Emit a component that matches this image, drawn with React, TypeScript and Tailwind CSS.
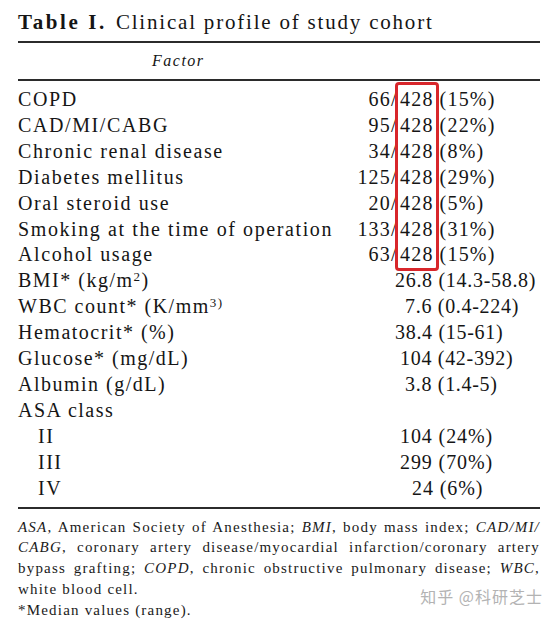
const counts = [
  { label: "COPD", n: "66", pct: "(15%)" },
  { label: "CAD/MI/CABG", n: "95", pct: "(22%)" },
  { label: "Chronic renal disease", n: "34", pct: "(8%)" },
  { label: "Diabetes mellitus", n: "125", pct: "(29%)" },
  { label: "Oral steroid use", n: "20", pct: "(5%)" },
  { label: "Smoking at the time of operation", n: "133", pct: "(31%)" },
  { label: "Alcohol usage", n: "63", pct: "(15%)" },
];

function Rule() {
  return <div className="h-[2px] bg-[#2b2b2b]" />;
}

export default function App() {
  return (
    <div className="relative w-[558px] h-[622px] overflow-hidden bg-white px-[18px] font-['Liberation_Serif',serif] text-[#151515]">
      {/* Title */}
      <h1 className="pt-[8px] h-[41px] text-[21px] leading-[28px] whitespace-nowrap">
        <span className="font-bold tracking-[2.6px]">Table I.</span>
        <span className="ml-[9px] tracking-[1.8px]">Clinical profile of study cohort</span>
      </h1>
      <Rule />
      <div className="h-[36px] flex items-center pl-[134px] text-[16px] italic tracking-[1.5px]">Factor</div>
      <Rule />

      {/* Count rows */}
      <div className="mt-[6px] flex items-start text-[20px] leading-[25.9px] whitespace-nowrap">
        <div className="w-[330px] tracking-[1.6px]">
          {counts.map((r) => (
            <div key={r.label}>{r.label}</div>
          ))}
        </div>
        <div className="w-[43px] text-right tracking-[1.2px]">
          {counts.map((r) => (
            <div key={r.label}>{r.n}</div>
          ))}
        </div>
        <div className="w-[4px]">
          {counts.map((r) => (
            <div key={r.label}>/</div>
          ))}
        </div>
        <div className="-mt-[5px] -mb-[3px] pt-[2px] pl-[2px] pr-[2px] border-[3px] border-[#d8262b] rounded-[4px] tracking-[1.2px]">
          {counts.map((r) => (
            <div key={r.label}>428</div>
          ))}
        </div>
        <div className="pl-[1px] tracking-[1.2px]">
          {counts.map((r) => (
            <div key={r.label}>{r.pct}</div>
          ))}
        </div>
      </div>

      {/* Value rows */}
      <div className="text-[20px] leading-[25.9px] whitespace-nowrap">
        <div className="grid grid-cols-[377px_1fr]">
          <div className="tracking-[1.5px]">
            BMI* (kg/m<sup className="text-[13px]">2</sup>)
          </div>
          <div className="tracking-[0.7px]">26.8 (14.3-58.8)</div>
        </div>
        <div className="grid grid-cols-[377px_1fr]">
          <div className="tracking-[1.5px]">
            WBC count* (K/mm<sup className="text-[13px]">3)</sup>
          </div>
          <div className="pl-[10px] tracking-[0.7px]">7.6 (0.4-224)</div>
        </div>
        <div className="grid grid-cols-[377px_1fr]">
          <div className="tracking-[1.5px]">Hematocrit* (%)</div>
          <div className="tracking-[0.7px]">38.4 (15-61)</div>
        </div>
        <div className="grid grid-cols-[377px_1fr]">
          <div className="tracking-[1.5px]">Glucose* (mg/dL)</div>
          <div className="pl-[5px] tracking-[0.7px]">104 (42-392)</div>
        </div>
        <div className="grid grid-cols-[377px_1fr]">
          <div className="tracking-[1.5px]">Albumin (g/dL)</div>
          <div className="pl-[10px] tracking-[0.7px]">3.8 (1.4-5)</div>
        </div>
        <div className="tracking-[1.5px]">ASA class</div>
        <div className="grid grid-cols-[377px_1fr]">
          <div className="pl-[20px] tracking-[1.5px]">II</div>
          <div className="pl-[5px] tracking-[0.9px]">104 (24%)</div>
        </div>
        <div className="grid grid-cols-[377px_1fr]">
          <div className="pl-[20px] tracking-[1.5px]">III</div>
          <div className="pl-[5px] tracking-[0.9px]">299 (70%)</div>
        </div>
        <div className="grid grid-cols-[377px_1fr]">
          <div className="pl-[20px] tracking-[1.5px]">IV</div>
          <div className="pl-[17px] tracking-[0.9px]">24 (6%)</div>
        </div>
      </div>

      <div className="mt-[5px]">
        <Rule />
      </div>

      {/* Footnote */}
      <div className="mt-[8px] text-[15px] leading-[20.8px] tracking-[1.2px] text-[#1a1a1a] whitespace-nowrap">
        <p className="text-justify [text-align-last:justify]">
          <i>ASA</i>, American Society of Anesthesia; <i>BMI</i>, body mass index; <i>CAD/MI/</i>
        </p>
        <p className="text-justify [text-align-last:justify]">
          <i>CABG</i>, coronary artery disease/myocardial infarction/coronary artery
        </p>
        <p className="text-justify [text-align-last:justify]">
          bypass grafting; <i>COPD</i>, chronic obstructive pulmonary disease; <i>WBC</i>,
        </p>
        <p>white blood cell.</p>
        <p>*Median values (range).</p>
      </div>

      {/* Watermark */}
      <div className="absolute right-[15px] top-[584px] text-[16px] tracking-[1px] text-[#b3b3b3] font-['Noto_Sans_CJK_SC',sans-serif]">
        知乎 @科研芝士
      </div>
    </div>
  );
}
